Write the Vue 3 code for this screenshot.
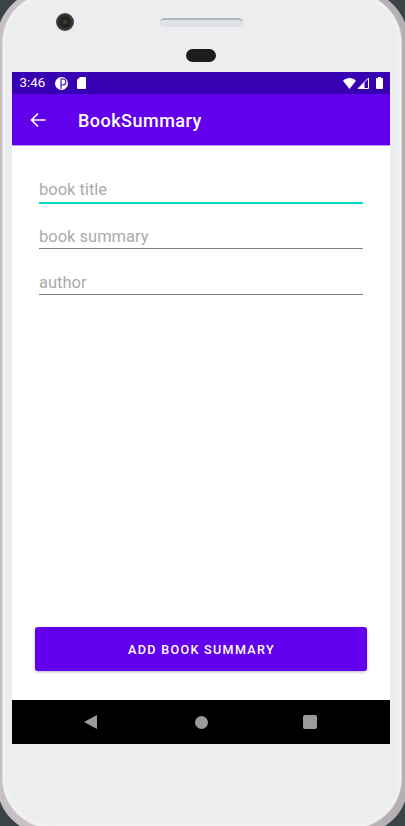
<script setup>
const fields = [
  { label: 'book title', focused: true },
  { label: 'book summary', focused: false },
  { label: 'author', focused: false }
]
</script>

<template>
  <div class="page">
    <div class="shell">
      <div class="bezel">
        <div class="top">
          <span class="camera"></span>
          <span class="speaker"></span>
          <span class="sensor"></span>
        </div>
        <div class="screen">
          <div class="status">
            <span class="time">3:46</span>
            <svg class="ic-p" viewBox="0 0 13 13" width="13" height="13">
              <circle cx="6.500" cy="6.500" r="6.500" fill="#fff" />
              <path d="M6 1.500V12M6 2h1.800a3 3 0 0 1 0 6H6" fill="none" stroke="#3700b3" stroke-width="1.100" />
            </svg>
            <svg class="ic-sd" viewBox="0 0 9 12" width="9" height="12">
              <path d="M3 0H8a1 1 0 0 1 1 1v10a1 1 0 0 1-1 1H1a1 1 0 0 1-1-1V3z" fill="#fff" />
            </svg>
            <span class="grow"></span>
            <svg class="ic-wifi" viewBox="0 0 13 11" width="13" height="11">
              <path d="M0 2.800C1.800 1 4 0 6.500 0S11.200 1 13 2.800L6.500 11z" fill="#fff" />
            </svg>
            <svg class="ic-signal" viewBox="0 0 12 12" width="12" height="12">
              <path d="M11.500 1v10.500H1z" fill="none" stroke="#fff" stroke-width="1" />
              <path d="M7.500 5v7H1z" fill="#fff" />
            </svg>
            <svg class="ic-batt" viewBox="0 0 7 12" width="7" height="12">
              <path d="M2 0h3v1H6a1 1 0 0 1 1 1v9a1 1 0 0 1-1 1H1a1 1 0 0 1-1-1V2a1 1 0 0 1 1-1h1z" fill="#fff" />
            </svg>
          </div>
          <div class="appbar">
            <svg class="back" viewBox="0 0 16 16" width="16" height="16">
              <path d="M15.500 8H1.500M8 1.500 1.500 8 8 14.500" fill="none" stroke="#fff" stroke-width="1.700" />
            </svg>
            <span class="title">BookSummary</span>
          </div>
          <main class="content">
            <div class="form">
              <div v-for="f in fields" :key="f.label" class="field" :class="{ focused: f.focused }">
                {{ f.label }}
              </div>
            </div>
            <button class="action">ADD BOOK SUMMARY</button>
          </main>
          <div class="navbar">
            <svg viewBox="0 0 13 14" width="13" height="14" class="nav-back">
              <path d="M13 0v14L0 7z" fill="#9b9b9b" />
            </svg>
            <span class="nav-home"></span>
            <span class="nav-recent"></span>
          </div>
        </div>
      </div>
    </div>
  </div>
</template>

<style>
html, body { margin: 0; background: #3a4345; }
</style>

<style scoped>
.page {
  width: 405px;
  height: 826px;
  overflow: hidden;
  background: #3a4345;
  font-family: Roboto, "Liberation Sans", sans-serif;
}
.shell {
  box-sizing: border-box;
  width: 411px;
  height: 844px;
  margin: -10px 0 0 -3px;
  padding: 3px 7px 6px 6px;
  border-radius: 50px;
  background: linear-gradient(90deg, #c6bfc3, #cdc8ca 50%, #b4aeb0);
}
.bezel {
  box-sizing: border-box;
  height: 100%;
  padding-left: 9px;
  border-radius: 50px;
  background: #ecedef;
  box-shadow: inset 0 0 5px #fafafb, 0 0 0 1px #e2dfe0;
  display: flex;
  flex-direction: column;
}
.top {
  position: relative;
  height: 79px;
  flex: none;
}
.camera {
  position: absolute;
  left: 44px;
  top: 20px;
  width: 18px;
  height: 18px;
  border-radius: 50%;
  background: radial-gradient(circle, #4a4a30 0, #1d1d1a 30%, #2e2f33 50%, #5a5c60 90%);
}
.speaker {
  position: absolute;
  left: 148px;
  top: 25px;
  width: 83px;
  height: 9px;
  box-sizing: border-box;
  border-radius: 5px;
  background: #dfe1e4;
  border-top: 2px solid #b3b8bd;
}
.sensor {
  position: absolute;
  left: 174px;
  top: 56px;
  width: 30px;
  height: 13px;
  border-radius: 7px;
  background: #1d1d20;
}
.screen {
  width: 378px;
  height: 672px;
  flex: none;
  display: flex;
  flex-direction: column;
  background: #fff;
}
.status {
  height: 22px;
  flex: none;
  background: #3700b3;
  display: flex;
  align-items: center;
  padding: 0 7px 0 7.500px;
  color: #fff;
}
.time {
  font-size: 13.300px;
  line-height: 22px;
  width: 24.500px;
  white-space: nowrap;
}
.ic-p { margin-left: 11px; }
.ic-sd { margin-left: 9px; }
.grow { flex: 1; }
.ic-signal { margin-left: 1px; }
.ic-batt { margin-left: 7px; }
.appbar {
  height: 52px;
  flex: none;
  box-sizing: border-box;
  background: #6200ee;
  border-bottom: 1px solid #b89af0;
  display: flex;
  align-items: center;
  padding-top: 1px;
}
.back { margin-left: 18px; }
.title {
  margin-left: 32px;
  color: #fff;
  font-size: 18px;
  font-weight: 500;
  letter-spacing: 0.48px;
}
.content {
  flex: 1;
  display: flex;
  flex-direction: column;
  justify-content: space-between;
  padding: 21px 23px 29px;
  min-height: 0;
}
.form {
  display: flex;
  flex-direction: column;
  gap: 10px;
  padding: 0 4px;
}
.field {
  box-sizing: border-box;
  height: 36px;
  border-bottom: 1px solid #808080;
  color: #ababab;
  font-size: 16.500px;
  line-height: 48px;
  font-weight: 400;
  overflow: hidden;
}
.field.focused {
  height: 37px;
  line-height: 46px;
  border-bottom: 2px solid #03dac5;
  margin-bottom: -1px;
}
.action {
  height: 44px;
  border: 0;
  border-radius: 3px;
  background: #6200ee;
  color: #fff;
  font-family: inherit;
  font-size: 12.600px;
  font-weight: 500;
  letter-spacing: 1.300px;
  box-shadow: 0 1px 3px rgba(60, 30, 120, 0.35);
  padding: 0 0 0 1px;
}
.navbar {
  height: 44px;
  flex: none;
  background: #000;
  display: flex;
  align-items: center;
}
.nav-back { margin-left: 72px; }
.nav-home {
  margin-left: 98px;
  width: 13px;
  height: 13px;
  border-radius: 50%;
  background: #9b9b9b;
}
.nav-recent {
  margin-left: 95px;
  width: 14px;
  height: 14px;
  border-radius: 2px;
  background: #9b9b9b;
}
</style>
